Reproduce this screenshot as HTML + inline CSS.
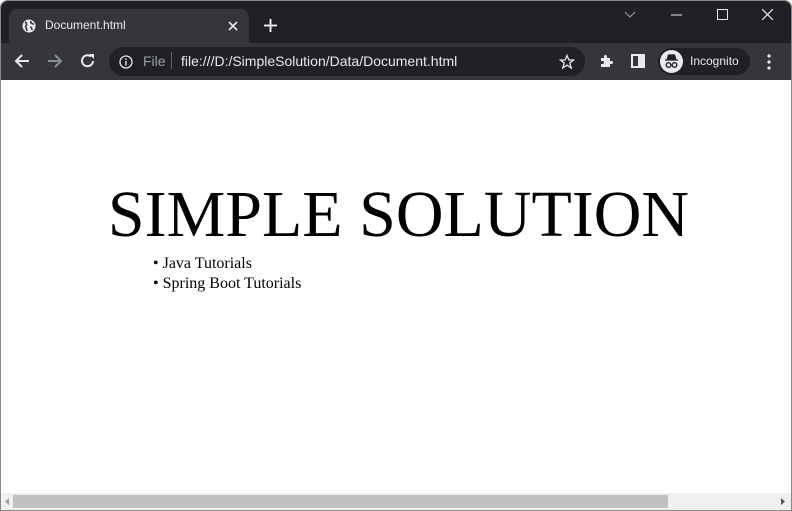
<!DOCTYPE html>
<html><head><meta charset="utf-8"><style>
*{margin:0;padding:0;box-sizing:border-box}
body{width:792px;height:511px;overflow:hidden;background:#fff;position:relative;font-family:"Liberation Sans",sans-serif}
.frame{position:absolute;inset:0;border:1px solid #8a8a8a;border-radius:8px 8px 0 0;pointer-events:none}
.tabs{position:absolute;left:0;top:0;width:792px;height:43px;background:#202124;border-radius:8px 8px 0 0}
.tab{position:absolute;left:9px;top:9px;width:240px;height:34px;background:#35363a;border-radius:8px 8px 0 0}
.tab .t{position:absolute;left:36px;top:9px;color:#e8eaed;font-size:12px}
.toolbar{position:absolute;left:0;top:43px;width:792px;height:37px;background:#35363a}
.omni{position:absolute;left:109px;top:4px;width:476px;height:29px;background:#202124;border-radius:15px}
.url{position:absolute;left:181px;top:10px;font-size:14px;color:#e8eaed}
.file{position:absolute;left:143px;top:10px;font-size:14px;color:#9aa0a6}
.sep{position:absolute;left:171px;top:9px;width:1px;height:17px;background:#5f6368}
.inc{position:absolute;left:658px;top:5px;width:92px;height:27px;background:#202124;border-radius:14px}
.inc span{position:absolute;left:32px;top:6px;font-size:12px;color:#e8eaed}
h1{position:absolute;left:0;width:792px;text-align:center;top:182px;font:400 66px/66px "Liberation Serif",serif;color:#000;padding-left:5px}
.li{position:absolute;left:153px;font:16px/20px "Liberation Serif",serif;color:#000}
.sb{position:absolute;left:1px;top:493px;width:790px;height:17px;background:#f0f0f0}
.thumb{position:absolute;left:12px;top:2px;width:655px;height:13px;background:#c1c1c1}
</style></head><body>
<div class="tabs">
<div class="tab">
<svg style="position:absolute;left:13px;top:10px" width="14" height="14" viewBox="0 0 14 14"><circle cx="7" cy="7" r="6.5" fill="#e8eaed"/><path d="M3 3c2 1 2 3 1 4s1 3 1 5M9 2c-1 2 1 3 3 3M8 8c1 0 2 1 2 3" stroke="#35363a" stroke-width="1.6" fill="none"/></svg>
<span class="t">Document.html</span>
<svg style="position:absolute;left:219px;top:12px" width="10" height="10"><path d="M1 1L9 9M9 1L1 9" stroke="#e8eaed" stroke-width="1.6"/></svg>
</div>
<svg style="position:absolute;left:264px;top:19px" width="13" height="13"><path d="M6.5 0V13M0 6.5H13" stroke="#fff" stroke-width="1.8"/></svg>
<svg style="position:absolute;left:624px;top:11px" width="12" height="8"><path d="M1 1L6 6L11 1" stroke="#9aa0a6" fill="none"/></svg>
<svg style="position:absolute;left:671px;top:14px" width="11" height="2"><path d="M0 1H11" stroke="#e8eaed"/></svg>
<svg style="position:absolute;left:717px;top:9px" width="11" height="11"><rect x=".5" y=".5" width="10" height="10" stroke="#e8eaed" fill="none"/></svg>
<svg style="position:absolute;left:762px;top:9px" width="11" height="11"><path d="M0 0L11 11M11 0L0 11" stroke="#e8eaed" stroke-width="1.2"/></svg>
</div>
<div class="toolbar">
<svg style="position:absolute;left:14px;top:10px" width="16" height="16"><path d="M15 8H2M8 2L2 8L8 14" stroke="#e8eaed" stroke-width="2" fill="none"/></svg>
<svg style="position:absolute;left:47px;top:10px" width="16" height="16"><path d="M1 8H14M8 2L14 8L8 14" stroke="#8a8d91" stroke-width="2" fill="none"/></svg>
<svg style="position:absolute;left:80px;top:10px" width="16" height="16"><path d="M13 8A5.5 5.5 0 1 1 11 3.5" stroke="#e8eaed" stroke-width="2" fill="none"/><path d="M9 1H14V6Z" fill="#e8eaed"/></svg>
<div class="omni">
<svg style="position:absolute;left:10px;top:8px" width="14" height="14"><circle cx="7" cy="7" r="6" stroke="#e8eaed" stroke-width="1.3" fill="none"/><path d="M7 6V10.5M7 3.5V5" stroke="#e8eaed" stroke-width="1.4"/></svg>
<svg style="position:absolute;left:450px;top:7px" width="16" height="16" viewBox="0 0 16 16"><path d="M8 1.5L9.9 6H14.5L10.8 9L12.2 14L8 11.2L3.8 14L5.2 9L1.5 6H6.1Z" stroke="#e8eaed" stroke-width="1.3" fill="none"/></svg>
</div>
<span class="file">File</span><div class="sep"></div>
<span class="url">file:///D:/SimpleSolution/Data/Document.html</span>
<svg style="position:absolute;left:599px;top:11px" width="15" height="15" viewBox="0 0 15 15"><path d="M2 4H5V2.5A1.5 1.5 0 0 1 8 2.5V4H11V7H12.5A1.5 1.5 0 0 1 12.5 10H11V13H2V10H3.5A1.5 1.5 0 0 0 3.5 7H2Z" fill="#e8eaed"/></svg>
<svg style="position:absolute;left:631px;top:11px" width="14" height="14"><rect x="1" y="1" width="12" height="12" stroke="#e8eaed" stroke-width="2" fill="none"/><rect x="7" y="1" width="6" height="12" fill="#e8eaed"/></svg>
<div class="inc"><svg style="position:absolute;left:2px;top:2px" width="23" height="23"><circle cx="11.5" cy="11.5" r="11.5" fill="#e8eaed"/><path d="M5 10H18M7 10L8.5 5H14.5L16 10" fill="#202124" stroke="#202124" stroke-width="1.2"/><circle cx="8.5" cy="15" r="2.3" stroke="#202124" stroke-width="1.4" fill="none"/><circle cx="14.5" cy="15" r="2.3" stroke="#202124" stroke-width="1.4" fill="none"/></svg><span>Incognito</span></div>
<svg style="position:absolute;left:767px;top:11px" width="4" height="16"><circle cx="2" cy="2" r="1.6" fill="#e8eaed"/><circle cx="2" cy="8" r="1.6" fill="#e8eaed"/><circle cx="2" cy="14" r="1.6" fill="#e8eaed"/></svg>
</div>
<h1>SIMPLE SOLUTION</h1>
<div class="li" style="top:254px">• Java Tutorials</div>
<div class="li" style="top:274px">• Spring Boot Tutorials</div>
<div class="sb"><div class="thumb"></div>
<svg style="position:absolute;left:4px;top:5px" width="4" height="7"><path d="M4 0V7L0 3.5Z" fill="#a0a0a0"/></svg>
<svg style="position:absolute;left:780px;top:5px" width="4" height="7"><path d="M0 0V7L4 3.5Z" fill="#505050"/></svg>
</div>
<div class="frame"></div>
</body></html>
